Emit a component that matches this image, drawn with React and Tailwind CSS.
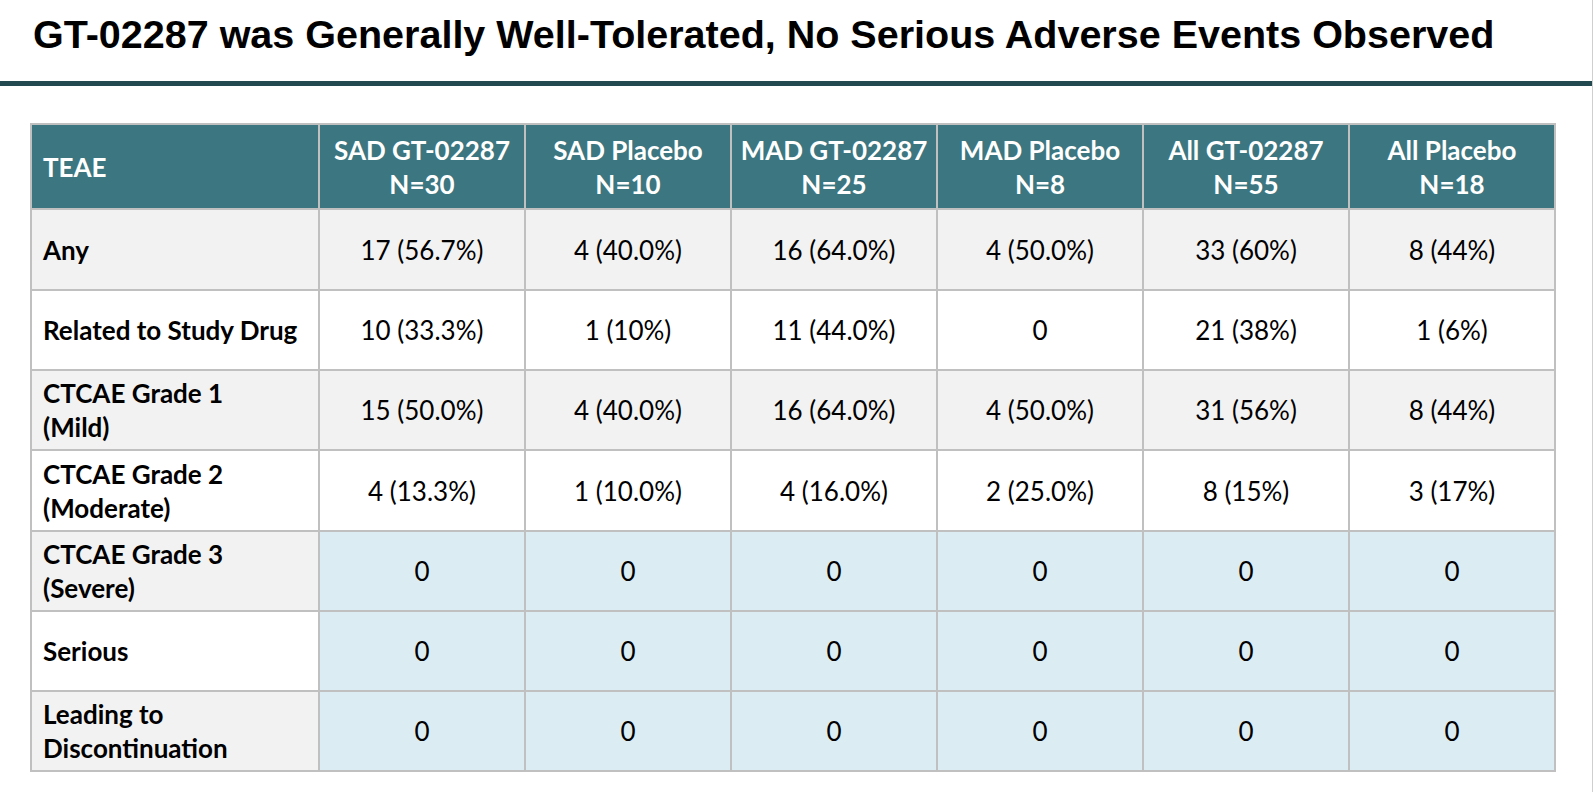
import React from "react";

const headers = [
  ["SAD GT-02287", "N=30"],
  ["SAD Placebo", "N=10"],
  ["MAD GT-02287", "N=25"],
  ["MAD Placebo", "N=8"],
  ["All GT-02287", "N=55"],
  ["All Placebo", "N=18"],
];

const rows = [
  { label: ["Any"], vals: ["17 (56.7%)", "4 (40.0%)", "16 (64.0%)", "4 (50.0%)", "33 (60%)", "8 (44%)"], lbg: "bg-[#f2f2f2]", vbg: "bg-[#f2f2f2]" },
  { label: ["Related to Study Drug"], vals: ["10 (33.3%)", "1 (10%)", "11 (44.0%)", "0", "21 (38%)", "1 (6%)"], lbg: "bg-white", vbg: "bg-white" },
  { label: ["CTCAE Grade 1", "(Mild)"], vals: ["15 (50.0%)", "4 (40.0%)", "16 (64.0%)", "4 (50.0%)", "31 (56%)", "8 (44%)"], lbg: "bg-[#f2f2f2]", vbg: "bg-[#f2f2f2]" },
  { label: ["CTCAE Grade 2", "(Moderate)"], vals: ["4 (13.3%)", "1 (10.0%)", "4 (16.0%)", "2 (25.0%)", "8 (15%)", "3 (17%)"], lbg: "bg-white", vbg: "bg-white" },
  { label: ["CTCAE Grade 3", "(Severe)"], vals: ["0", "0", "0", "0", "0", "0"], lbg: "bg-[#f2f2f2]", vbg: "bg-[#dbedf3]" },
  { label: ["Serious"], vals: ["0", "0", "0", "0", "0", "0"], lbg: "bg-white", vbg: "bg-[#dbedf3]" },
  { label: ["Leading to", "Discontinuation"], vals: ["0", "0", "0", "0", "0", "0"], lbg: "bg-[#f2f2f2]", vbg: "bg-[#dbedf3]" },
];

export default function App() {
  return (
    <div className="w-[1594px] h-[792px] bg-white overflow-hidden">
      <div className="w-[1593px] h-[792px] border-r border-[#cfcfcf]">
        <h1 className="pt-[12px] pl-[33px] text-[39.5px] leading-[45px] font-bold text-black whitespace-nowrap [font-family:'Liberation_Sans',Arial,sans-serif]">
          GT-02287 was Generally Well-Tolerated, No Serious Adverse Events Observed
        </h1>
        <div className="mt-[24px] h-[5px] bg-[#22494f]" />
        <div className="mt-[37px] ml-[30px] w-[1526px] grid grid-cols-[286px_repeat(6,204px)] grid-rows-[83px_79px_78px_78px_79px_78px_78px_78px] gap-[2px] p-[2px] bg-[#c0c0c0] text-[26px] leading-[34px] text-black [font-family:Lato,'Noto_Sans',sans-serif]">
          <div className="bg-[#3c7680] text-white font-bold flex items-center pl-[11px]">TEAE</div>
          {headers.map((h, i) => (
            <div key={i} className="bg-[#3c7680] text-white font-bold flex flex-col items-center justify-center text-center whitespace-nowrap">
              <span>{h[0]}</span>
              <span>{h[1]}</span>
            </div>
          ))}
          {rows.map((r, ri) => (
            <React.Fragment key={ri}>
              <div className={`${r.lbg} font-bold flex flex-col justify-center pl-[11px] whitespace-nowrap`}>
                {r.label.map((l, li) => (
                  <span key={li}>{l}</span>
                ))}
              </div>
              {r.vals.map((v, vi) => (
                <div key={vi} className={`${r.vbg} flex items-center justify-center whitespace-nowrap`}>
                  {v}
                </div>
              ))}
            </React.Fragment>
          ))}
        </div>
      </div>
    </div>
  );
}
